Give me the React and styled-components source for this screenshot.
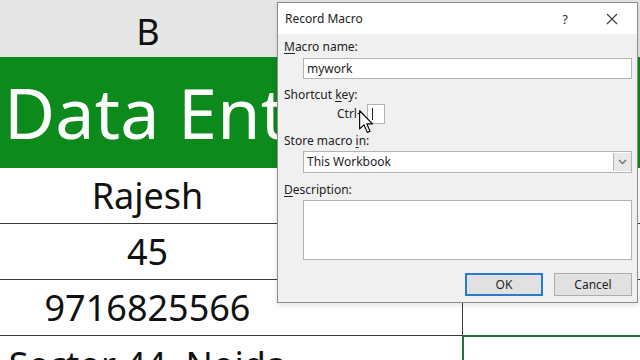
import React from 'react';
import styled, { createGlobalStyle } from 'styled-components';

const GlobalStyle = createGlobalStyle`
  html, body {
    margin: 0;
    padding: 0;
    background: #fff;
    overflow: hidden;
  }
  #root {
    width: 640px;
    height: 360px;
  }
`;

const App = () => {
  return (
    <Screen>
      <GlobalStyle />
      <Sheet>
        <HeaderRow>
          <HeadCell>B</HeadCell>
          <HeadCell />
        </HeaderRow>
        <TitleRow>Data Entry Form</TitleRow>
        <Row>
          <Cell>Rajesh</Cell>
          <Cell />
        </Row>
        <Row>
          <Cell>45</Cell>
          <Cell />
        </Row>
        <Row>
          <Cell>9716825566</Cell>
          <Cell />
        </Row>
        <Row $last>
          <Cell>Sector 44, Noida</Cell>
          <Cell $selected />
        </Row>
      </Sheet>

      <Dialog>
        <TitleBar>
          <DialogTitle>Record Macro</DialogTitle>
          <TitleButtons>
            <Help>?</Help>
            <CloseIcon width="12" height="12" viewBox="0 0 12 12">
              <path d="M1 1 L11 11 M11 1 L1 11" stroke="#3c3c3c" strokeWidth="1.1" fill="none" />
            </CloseIcon>
          </TitleButtons>
        </TitleBar>
        <DialogBody>
          <Label><u>M</u>acro name:</Label>
          <TextBox>mywork</TextBox>
          <Label $gap={8}>Shortcut <u>k</u>ey:</Label>
          <ShortcutRow>
            <CtrlText>Ctrl+</CtrlText>
            <KeyBox><Caret /></KeyBox>
            <Pointer width="15" height="24" viewBox="0 0 12 19">
              <path d="M0.5 0.5 L0.5 15 L4 11.8 L6.6 17.8 L8.8 16.9 L6.3 11 L10.8 11 Z" fill="#fff" stroke="#000" strokeWidth="0.9" strokeLinejoin="round" />
            </Pointer>
          </ShortcutRow>
          <Label $gap={9}>Store macro <u>i</u>n:</Label>
          <SelectBox>
            <SelectText>This Workbook</SelectText>
            <DropButton>
              <svg width="9" height="6" viewBox="0 0 9 6">
                <path d="M1 1 L4.5 4.5 L8 1" stroke="#6b6b6b" strokeWidth="1.3" fill="none" />
              </svg>
            </DropButton>
          </SelectBox>
          <Label $gap={9}><u>D</u>escription:</Label>
          <TextArea />
          <Buttons>
            <Button $primary>OK</Button>
            <Button>Cancel</Button>
          </Buttons>
        </DialogBody>
      </Dialog>
    </Screen>
  );
};

const Screen = styled.div`
  position: relative;
  width: 640px;
  height: 360px;
  overflow: hidden;
  background: #fff;
`;

const Sheet = styled.div`
  margin-left: -167px;
  width: 807px;
  font-family: "Noto Sans", "Open Sans", sans-serif;
  color: #111;
`;

const HeaderRow = styled.div`
  display: grid;
  grid-template-columns: 630px 1fr;
  height: 57px;
  background: #e6e6e6;
`;

const HeadCell = styled.div`
  display: flex;
  align-items: center;
  justify-content: center;
  padding-top: 6px;
  font-size: 36px;
  color: #111;
`;

const TitleRow = styled.div`
  height: 111px;
  background: #0c8a1c;
  color: #fff;
  font-size: 70px;
  line-height: 111px;
  padding-left: 171px;
  white-space: nowrap;
  overflow: hidden;
  letter-spacing: 0.2px;
`;

const Row = styled.div`
  display: grid;
  grid-template-columns: 630px 1fr;
  height: ${p => (p.$last ? '56px' : '55px')};
  border-bottom: ${p => (p.$last ? 'none' : '1px solid #3a3a3a')};
`;

const Cell = styled.div`
  display: flex;
  align-items: center;
  justify-content: center;
  font-size: 36px;
  white-space: nowrap;
  border-right: 1px solid #3a3a3a;
  &:last-child {
    border-right: none;
    border-left: ${p => (p.$selected ? '2px solid #217346' : 'none')};
    border-top: ${p => (p.$selected ? '2px solid #217346' : 'none')};
    margin-left: ${p => (p.$selected ? '-1px' : '0')};
    margin-top: ${p => (p.$selected ? '-1px' : '0')};
  }
`;

const Dialog = styled.div`
  position: absolute;
  left: 277px;
  top: 2px;
  width: 359px;
  height: 299px;
  border: 1px solid #8c8c8c;
  background: #f0f0f0;
  font-family: "Noto Sans", "Open Sans", sans-serif;
  font-size: 12px;
  color: #1e1e1e;
  box-shadow: 0 2px 6px rgba(0, 0, 0, 0.12);
  display: flex;
  flex-direction: column;
`;

const TitleBar = styled.div`
  height: 31px;
  background: #fff;
  display: flex;
  align-items: center;
  justify-content: space-between;
  padding: 0 19px 0 7px;
`;

const DialogTitle = styled.span`
  font-size: 12px;
  color: #222;
`;

const TitleButtons = styled.div`
  display: flex;
  align-items: center;
  gap: 38px;
`;

const Help = styled.span`
  font-size: 13px;
  color: #333;
`;

const CloseIcon = styled.svg`
  display: block;
`;

const DialogBody = styled.div`
  flex: 1;
  display: flex;
  flex-direction: column;
  padding: 5px 5px 0 6px;
`;

const Label = styled.div`
  height: 16px;
  line-height: 16px;
  margin-top: ${p => (p.$gap ? `${p.$gap}px` : '0')};
  color: #222;
  u {
    text-decoration-thickness: 1px;
    text-underline-offset: 2px;
  }
`;

const TextBox = styled.div`
  margin: 3px 0 0 19px;
  height: 19px;
  border: 1px solid #b4b4b4;
  background: #fff;
  padding-left: 3px;
  line-height: 19px;
  color: #1a1a1a;
`;

const ShortcutRow = styled.div`
  position: relative;
  display: flex;
  align-items: center;
  margin: 1px 0 0 53px;
  height: 20px;
`;

const CtrlText = styled.span`
  width: 30px;
  line-height: 16px;
`;

const KeyBox = styled.div`
  width: 18px;
  height: 20px;
  border: 1px solid #b4b4b4;
  background: #fff;
  display: flex;
  align-items: center;
  padding-left: 4px;
  box-sizing: border-box;
`;

const Caret = styled.div`
  width: 1px;
  height: 12px;
  background: #222;
`;

const Pointer = styled.svg`
  position: absolute;
  left: 22px;
  top: 6px;
`;

const SelectBox = styled.div`
  margin: 2px 0 0 19px;
  height: 20px;
  border: 1px solid #b4b4b4;
  background: #fff;
  display: flex;
  align-items: center;
  justify-content: space-between;
`;

const SelectText = styled.span`
  padding-left: 3px;
  line-height: 16px;
`;

const DropButton = styled.div`
  width: 17px;
  height: 18px;
  border-left: 1px solid #b4b4b4;
  background: #e8e8e8;
  display: flex;
  align-items: center;
  justify-content: center;
`;

const TextArea = styled.div`
  margin: 2px 0 0 19px;
  height: 58px;
  border: 1px solid #b4b4b4;
  background: #fff;
`;

const Buttons = styled.div`
  display: flex;
  justify-content: flex-end;
  gap: 11px;
  margin-top: 13px;
`;

const Button = styled.div`
  width: 78px;
  height: 23px;
  box-sizing: border-box;
  display: flex;
  align-items: center;
  justify-content: center;
  background: #e1e1e1;
  border: ${p => (p.$primary ? '2px solid #2a7ad2' : '1px solid #adadad')};
  color: #1e1e1e;
`;

export default App;
